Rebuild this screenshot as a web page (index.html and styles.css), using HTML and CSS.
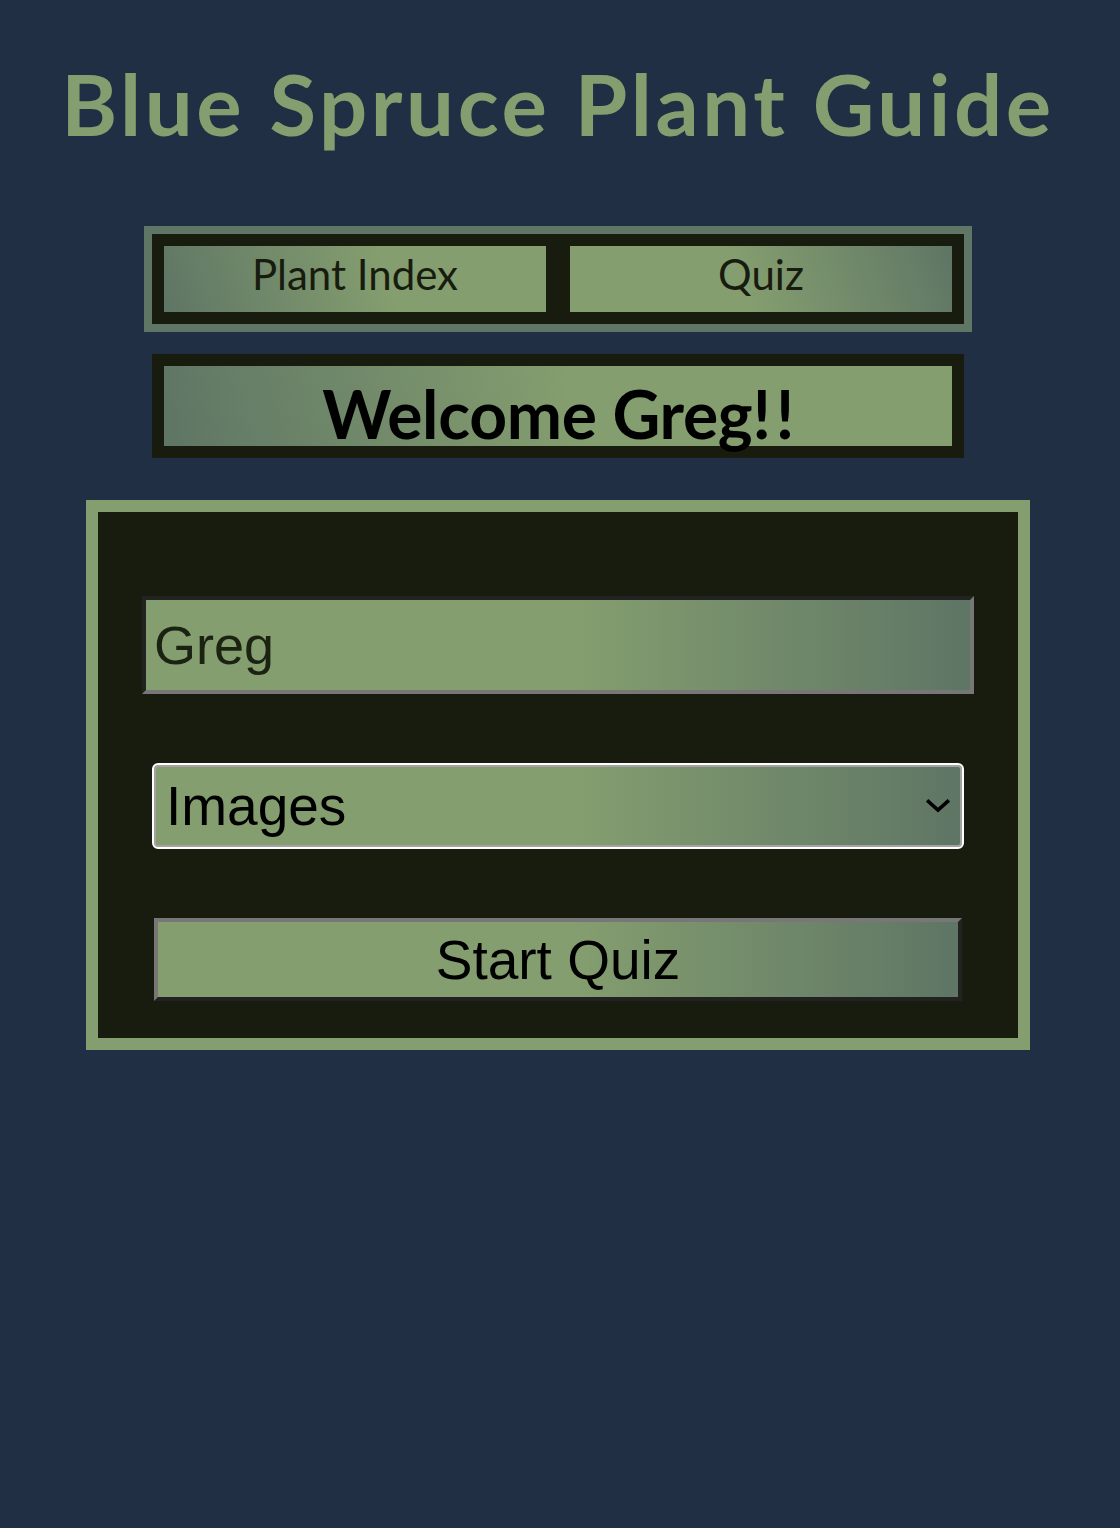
FILE: index.html
```html
<!DOCTYPE html>
<html lang="en">
<head>
<meta charset="utf-8">
<title>Blue Spruce Plant Guide</title>
<link rel="stylesheet" href="styles.css">
</head>
<body>
<main class="page">
  <h1 class="title">Blue Spruce Plant Guide</h1>
  <nav class="nav">
    <a class="nav-btn nav-btn-left" href="#">Plant Index</a>
    <a class="nav-btn nav-btn-right" href="#">Quiz</a>
  </nav>
  <div class="welcome">
    <div class="welcome-inner">
      <h2 class="welcome-text">Welcome Greg!<span class="bang">!</span></h2>
    </div>
  </div>
  <form class="quiz-form">
    <input class="name-input" type="text" value="Greg">
    <div class="select-wrap">
      <select class="mode-select">
        <option>Images</option>
        <option>Names</option>
      </select>
      <svg class="chevron" width="24" height="14" viewBox="0 0 24 14" aria-hidden="true">
        <path d="M2.5 2.5 L12 11 L21.5 2.5" fill="none" stroke="#000" stroke-width="3.6" stroke-linecap="square" stroke-linejoin="miter"/>
      </svg>
    </div>
    <button class="start-btn" type="button">Start Quiz</button>
  </form>
</main>
</body>
</html>
```

FILE: styles.css
```css
html, body {
  margin: 0;
  padding: 0;
}

body {
  background: #212f44;
  min-height: 1528px;
  font-family: Lato, "Liberation Sans", sans-serif;
}

.page {
  display: flex;
  flex-direction: column;
  align-items: center;
  padding-right: 4px;
}

.title {
  margin: 0;
  padding-top: 52px;
  font-family: Lato, sans-serif;
  font-weight: 700;
  font-size: 85px;
  line-height: normal;
  letter-spacing: 3.6px;
  color: #849e6f;
  white-space: nowrap;
}

.nav {
  margin-top: 72px;
  width: 828px;
  box-sizing: border-box;
  border: 8px solid #5f7565;
  background: #171c0f;
  padding: 12px;
  display: flex;
  gap: 24px;
}

.nav-btn {
  flex: 1;
  height: 66px;
  box-sizing: border-box;
  padding-top: 3px;
  text-align: center;
  font-family: Lato, sans-serif;
  font-size: 42px;
  line-height: normal;
  color: #171c0f;
  text-decoration: none;
}

.nav-btn-left {
  background: linear-gradient(72deg, #5f7565 0%, #849e6f 58%, #849e6f 100%);
}

.nav-btn-right {
  background: linear-gradient(72deg, #849e6f 0%, #849e6f 45%, #5f7565 100%);
}

.welcome {
  margin-top: 22px;
  width: 812px;
  box-sizing: border-box;
  border: 12px solid #171c0f;
  background: #171c0f;
}

.welcome-inner {
  height: 80px;
  box-sizing: border-box;
  padding-top: 15px;
  background: linear-gradient(78deg, #5f7565 0%, #849e6f 52%, #849e6f 100%);
}

.welcome-text {
  margin: 0;
  text-align: center;
  font-family: Lato, sans-serif;
  font-weight: 700;
  font-size: 66px;
  line-height: 1;
  letter-spacing: -0.3px;
  color: #000;
  white-space: nowrap;
}

.bang {
  margin-left: 5px;
}

.quiz-form {
  margin: 42px 0 0;
  width: 944px;
  box-sizing: border-box;
  border: 12px solid #849e6f;
  background: #171c0f;
  padding: 84px 0 37px;
  display: flex;
  flex-direction: column;
  align-items: center;
  gap: 69px;
}

.name-input {
  width: 832px;
  height: 98px;
  box-sizing: border-box;
  margin: 0;
  border-width: 4px;
  border-style: solid;
  border-color: #222 #777 #777 #222;
  padding: 0 8px;
  background: linear-gradient(to right, #849e6f 0%, #849e6f 52%, #5f7565 100%);
  font-family: "Liberation Sans", Arial, sans-serif;
  font-size: 54px;
  color: #1b2212;
  outline: none;
}

.select-wrap {
  position: relative;
  width: 812px;
  height: 86px;
}

.mode-select {
  width: 100%;
  height: 100%;
  box-sizing: border-box;
  margin: 0;
  appearance: none;
  -webkit-appearance: none;
  border: 2px solid #ffffff;
  border-radius: 6px;
  box-shadow: inset 0 0 0 2px #a3a3a3;
  padding: 0 50px 0 12px;
  background: linear-gradient(to right, #849e6f 0%, #849e6f 52%, #5f7565 100%);
  font-family: "Liberation Sans", Arial, sans-serif;
  font-size: 55px;
  color: #000;
  outline: none;
}

.chevron {
  position: absolute;
  right: 14px;
  top: 36px;
  pointer-events: none;
}

.start-btn {
  width: 808px;
  height: 83px;
  box-sizing: border-box;
  margin: 0;
  border-width: 4px;
  border-style: solid;
  border-color: #777 #222 #222 #777;
  padding: 0;
  background: linear-gradient(to right, #849e6f 0%, #849e6f 52%, #5f7565 100%);
  font-family: "Liberation Sans", Arial, sans-serif;
  font-size: 55px;
  color: #000;
  cursor: pointer;
}
```
